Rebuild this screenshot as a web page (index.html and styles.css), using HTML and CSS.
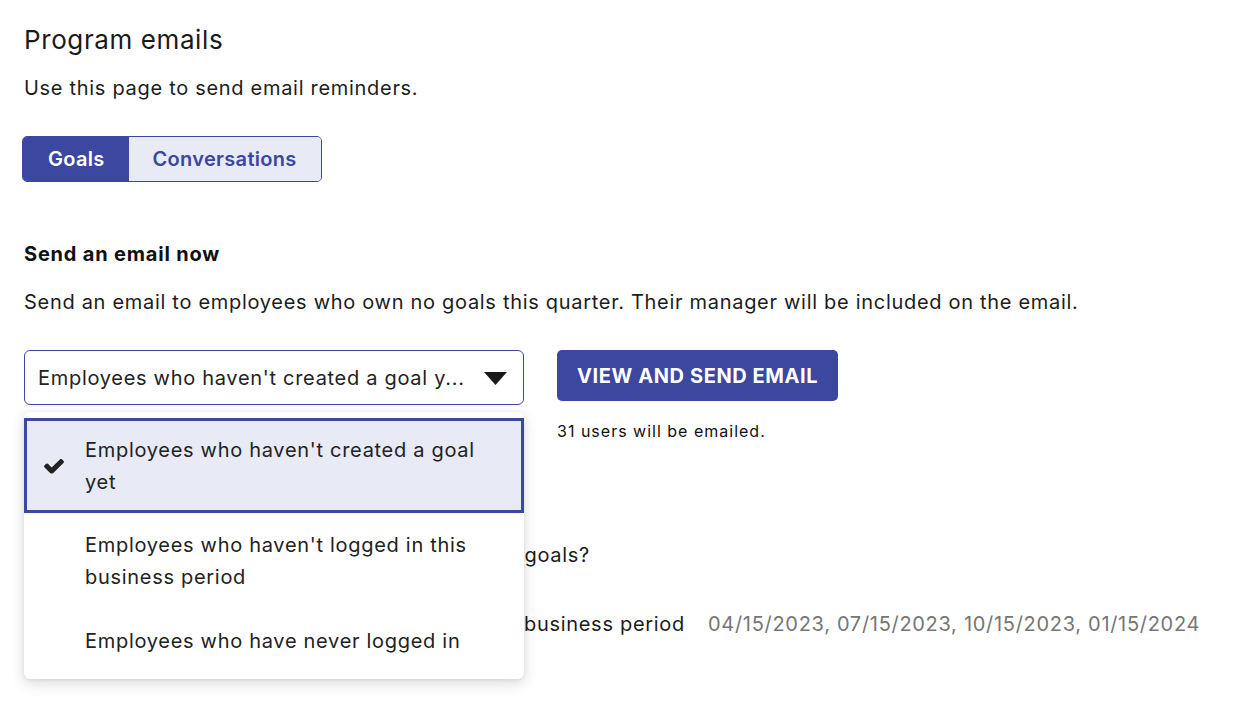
FILE: index.html
```html
<!DOCTYPE html>
<html lang="en">
<head>
<meta charset="utf-8">
<title>Program emails</title>
<link rel="stylesheet" href="styles.css">
</head>
<body>
<main class="page">
  <h1 class="title">Program emails</h1>
  <p class="intro">Use this page to send email reminders.</p>

  <div class="toggle">
    <button class="seg seg-active">Goals</button>
    <button class="seg">Conversations</button>
  </div>

  <section class="send">
    <h2 class="section-title">Send an email now</h2>
    <p class="section-desc">Send an email to employees who own no goals this quarter. Their manager will be included on the email.</p>

    <div class="send-row">
      <div class="select-wrap">
        <div class="select">
          <span class="select-text">Employees who haven't created a goal y...</span>
          <svg class="caret" width="23" height="13" viewBox="0 0 23 13"><path d="M0 0H23L11.5 13Z" fill="#1a1a1a"/></svg>
        </div>
        <ul class="menu">
          <li class="item item-selected">
            <svg class="check" width="20" height="15" viewBox="119 330 1552 1130"><path fill="#222" d="M1671 566q0 40-28 68l-724 724-136 136q-28 28-68 28t-68-28l-136-136-362-362q-28-28-28-68t28-68l136-136q28-28 68-28t68 28l294 295 656-657q28-28 68-28t68 28l136 136q28 28 28 68z"/></svg>
            <span>Employees who haven't created a goal yet</span>
          </li>
          <li class="item"><span>Employees who haven't logged in this business period</span></li>
          <li class="item"><span>Employees who have never logged in</span></li>
        </ul>
      </div>
      <div class="action">
        <button class="primary">View and send email</button>
        <p class="count">31 users will be emailed.</p>
      </div>
    </div>
  </section>

  <section class="auto">
    <h2 class="section-title">Automatic reminders</h2>
    <p class="auto-q">Send reminders to employees without any goals?</p>
    <div class="auto-row">
      <span class="auto-label">Reminders are sent on the 15th day of every business period</span>
      <span class="auto-dates">04/15/2023, 07/15/2023, 10/15/2023, 01/15/2024</span>
    </div>
  </section>
</main>
</body>
</html>
```

FILE: styles.css
```css
* { box-sizing: border-box; }

html, body {
  margin: 0;
  padding: 0;
  background: #ffffff;
}

body {
  font-family: Inter, "Noto Sans", sans-serif;
  color: #1c1c1c;
  font-size: 20px;
  letter-spacing: 0.7px;
  line-height: 28px;
  min-height: 706px;
}

.page {
  padding: 24px 24px 80px 24px;
}

.title {
  margin: 0;
  font-size: 26px;
  letter-spacing: 0.6px;
  line-height: 32px;
  font-weight: 400;
  color: #1a1a1a;
}

.intro {
  margin: 18px 0 0 0;
}

.toggle {
  display: flex;
  margin: 34px 0 0 -2px;
  width: max-content;
  border: 1px solid #3c47a0;
  border-radius: 5px;
  overflow: hidden;
  height: 46px;
}

.seg {
  font-family: inherit;
  font-size: 20px;
  letter-spacing: 0.3px;
  font-weight: 600;
  border: 0;
  margin: 0;
  padding: 0 24px;
  background: #e8eaf5;
  color: #3c47a0;
}

.seg-active {
  background: #3c47a0;
  color: #ffffff;
  padding: 0 24px 0 25px;
}

.send {
  margin-top: 58px;
}

.section-title {
  margin: 0;
  font-size: 20px;
  letter-spacing: 0.8px;
  line-height: 28px;
  font-weight: 700;
  color: #111;
}

.section-desc {
  margin: 20px 0 0 0;
}

.send-row {
  display: flex;
  gap: 33px;
  margin-top: 34px;
  align-items: flex-start;
}

.select-wrap {
  position: relative;
  width: 500px;
  flex: none;
}

.select {
  height: 55px;
  border: 1.5px solid #3c47a0;
  border-radius: 6px;
  display: flex;
  align-items: center;
  justify-content: space-between;
  padding: 0 16px 0 13px;
  color: #222;
}

.select-text {
  white-space: nowrap;
}

.caret {
  display: block;
  margin-top: 1px;
  flex: none;
}

.menu {
  position: absolute;
  top: 62px;
  left: 0;
  width: 500px;
  margin: 0;
  padding: 6px 0 6px 0;
  list-style: none;
  background: #fff;
  border-radius: 6px;
  box-shadow: 0 4px 14px rgba(0, 0, 0, 0.16), 0 1px 3px rgba(0, 0, 0, 0.06);
  z-index: 5;
}

.item {
  position: relative;
  border: 3px solid transparent;
  padding: 13px 30px 13px 58px;
  line-height: 32px;
  color: #222;
}

.item-selected {
  background: #e8eaf5;
  border-color: #3c47a0;
  padding-bottom: 12px;
}

.check {
  position: absolute;
  left: 17px;
  top: 50%;
  transform: translateY(-50%);
  display: block;
}

.primary {
  font-family: inherit;
  height: 51px;
  padding: 0 20px;
  border: 0;
  border-radius: 5px;
  background: #3c47a0;
  color: #fff;
  font-size: 20px;
  letter-spacing: 0.6px;
  font-weight: 700;
  text-transform: uppercase;
}

.count {
  margin: 20px 0 0 0;
  font-size: 16px;
  letter-spacing: 1px;
  line-height: 20px;
  color: #111;
}

.auto {
  margin-top: 40px;
}

.auto-q {
  margin: 32px 0 0 0;
  width: 566px;
  text-align: right;
}

.auto-row {
  display: flex;
  gap: 23px;
  margin-top: 41px;
}

.auto-label {
  flex: 0 0 661px;
  text-align: right;
}

.auto-dates {
  color: #767676;
  white-space: nowrap;
}
```
